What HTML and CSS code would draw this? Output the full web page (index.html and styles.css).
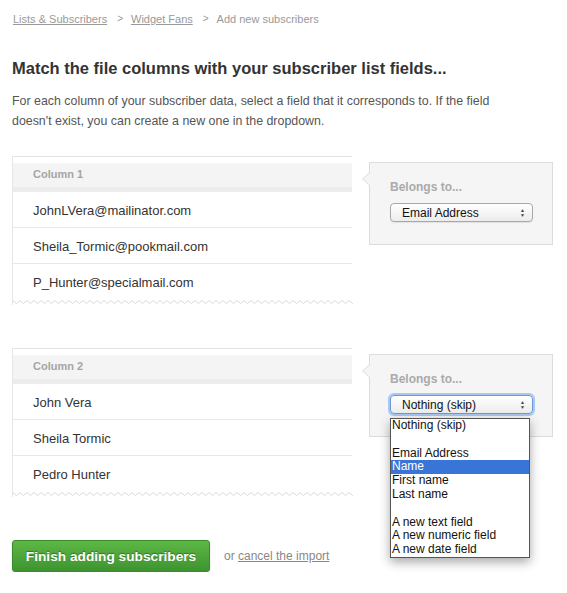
FILE: index.html
```html
<!DOCTYPE html>
<html>
<head>
<meta charset="utf-8">
<link rel="stylesheet" href="styles.css">
</head>
<body>
<div class="page">
  <nav class="crumbs">
    <a href="#">Lists &amp; Subscribers</a>
    <span class="sep">&gt;</span>
    <a href="#">Widget Fans</a>
    <span class="sep">&gt;</span>
    <span class="current">Add new subscribers</span>
  </nav>

  <h1 class="title">Match the file columns with your subscriber list fields...</h1>
  <p class="intro">For each column of your subscriber data, select a field that it corresponds to. If the field doesn't exist, you can create a new one in the dropdown.</p>

  <section class="mapping">
    <div class="column-table">
      <div class="col-head">Column 1</div>
      <div class="col-row">JohnLVera@mailinator.com</div>
      <div class="col-row">Sheila_Tormic@pookmail.com</div>
      <div class="col-row last">P_Hunter@specialmail.com</div>
      <svg class="zigzag" width="340" height="6" viewBox="0 0 340 6" preserveAspectRatio="none">
        <defs>
          <pattern id="zz1" width="7" height="6" patternUnits="userSpaceOnUse">
            <path d="M0 1.5 L3.5 4.5 L7 1.5" fill="none" stroke="#d8d8d8" stroke-width="1"/>
          </pattern>
        </defs>
        <rect width="340" height="6" fill="url(#zz1)"/>
      </svg>
    </div>
    <div class="belongs">
      <div class="belongs-label">Belongs to...</div>
      <div class="select">
        <span>Email Address</span>
        <span class="arrows">&#9650;<br>&#9660;</span>
      </div>
    </div>
  </section>

  <section class="mapping">
    <div class="column-table">
      <div class="col-head">Column 2</div>
      <div class="col-row">John Vera</div>
      <div class="col-row">Sheila Tormic</div>
      <div class="col-row last">Pedro Hunter</div>
      <svg class="zigzag" width="340" height="6" viewBox="0 0 340 6" preserveAspectRatio="none">
        <defs>
          <pattern id="zz2" width="7" height="6" patternUnits="userSpaceOnUse">
            <path d="M0 1.5 L3.5 4.5 L7 1.5" fill="none" stroke="#d8d8d8" stroke-width="1"/>
          </pattern>
        </defs>
        <rect width="340" height="6" fill="url(#zz2)"/>
      </svg>
    </div>
    <div class="belongs">
      <div class="belongs-label">Belongs to...</div>
      <div class="select focused">
        <span>Nothing (skip)</span>
        <span class="arrows">&#9650;<br>&#9660;</span>
      </div>
      <ul class="dropdown">
        <li>Nothing (skip)</li>
        <li class="blank"></li>
        <li>Email Address</li>
        <li class="selected">Name</li>
        <li>First name</li>
        <li>Last name</li>
        <li class="blank"></li>
        <li>A new text field</li>
        <li>A new numeric field</li>
        <li>A new date field</li>
      </ul>
    </div>
  </section>

  <div class="actions">
    <button class="finish">Finish adding subscribers</button>
    <span class="or">or <a href="#">cancel the import</a></span>
  </div>
</div>
</body>
</html>
```

FILE: styles.css
```css
* { box-sizing: border-box; }
html, body { margin: 0; padding: 0; background: #fff; }
body {
  font-family: "Liberation Sans", Arial, Helvetica, sans-serif;
  color: #333;
}
.page { padding: 12px 12px 0 12px; }

.crumbs {
  font-size: 11px;
  line-height: 14px;
  height: 14px;
  color: #999;
  padding-left: 1px;
  display: flex;
  align-items: center;
}
.crumbs a { color: #999; text-decoration: underline; }
.crumbs .sep { margin: 0 8px 0 10px; font-size: 10px; }
.crumbs .current { color: #999; }

.title {
  margin: 31px 0 0 0;
  font-size: 16.5px;
  line-height: 22px;
  font-weight: bold;
  color: #333;
}
.intro {
  margin: 12px 0 0 0;
  font-size: 12.4px;
  line-height: 20px;
  color: #555;
  width: 500px;
}

.mapping {
  display: flex;
  align-items: flex-start;
  gap: 17px;
  margin-top: 25px;
}
.mapping + .mapping { margin-top: 43px; }

.column-table {
  width: 340px;
  border-top: 1px solid #e3e3e3;
  border-left: 1px solid #e6e6e6;
  padding-top: 6px;
}
.col-head {
  height: 29px;
  padding: 3px 0 0 20px;
  font-size: 11px;
  line-height: 14px;
  font-weight: bold;
  color: #a5a5a5;
  background: #f4f4f4;
  border-top: 1px dotted #fafafa;
  border-bottom: 5px solid #ececec;
}
.col-row {
  height: 36px;
  padding: 11px 0 0 20px;
  font-size: 13px;
  line-height: 16px;
  color: #333;
  border-bottom: 1px solid #e8e8e8;
}
.col-row.last { border-bottom: none; height: 35px; }
.zigzag { display: block; width: 340px; height: 6px; }

.belongs {
  position: relative;
  width: 184px;
  height: 83px;
  margin-top: 6px;
  background: #f5f5f5;
  border: 1px solid #dcdcdc;
  padding: 17px 0 0 20px;
}
.belongs::before,
.belongs::after {
  content: "";
  position: absolute;
  top: 9px;
  width: 0;
  height: 0;
  border-style: solid;
}
.belongs::before {
  left: -8px;
  border-width: 7px 8px 7px 0;
  border-color: transparent #dcdcdc transparent transparent;
}
.belongs::after {
  left: -7px;
  top: 10px;
  border-width: 6px 7px 6px 0;
  border-color: transparent #f5f5f5 transparent transparent;
}
.belongs-label {
  font-size: 12px;
  line-height: 14px;
  font-weight: bold;
  color: #aaa;
}
.select {
  margin-top: 9px;
  width: 143px;
  height: 19px;
  border: 1px solid #a8a8a8;
  border-radius: 4px;
  background: linear-gradient(#ffffff, #ececec);
  box-shadow: 0 1px 1px rgba(0,0,0,0.08);
  display: flex;
  align-items: center;
  justify-content: space-between;
  padding: 0 7px 0 11px;
  font-size: 12px;
  color: #111;
}
.select.focused {
  border-color: #6a9ad8;
  box-shadow: 0 0 0 2px #a8c8f0;
}
.arrows {
  font-size: 5px;
  line-height: 5px;
  color: #444;
  text-align: center;
}

.dropdown {
  position: absolute;
  left: 20px;
  top: 63px;
  width: 140px;
  margin: 0;
  padding: 0;
  list-style: none;
  background: #fff;
  border: 1px solid #555;
  box-shadow: 0 4px 10px rgba(0,0,0,0.35);
  font-size: 12px;
  color: #111;
  z-index: 5;
}
.dropdown li {
  height: 13.8px;
  line-height: 13.8px;
  padding-left: 1px;
  white-space: nowrap;
}
.dropdown li.selected { background: #3875d7; color: #fff; }

.actions {
  margin-top: 43px;
  display: flex;
  align-items: center;
}
.finish {
  width: 198px;
  height: 32px;
  border: 1px solid #3b8b2b;
  border-radius: 3px;
  background: linear-gradient(#5db845, #3e9330);
  box-shadow: 0 1px 2px rgba(0,0,0,0.2);
  color: #fff;
  font-family: "Liberation Sans", Arial, sans-serif;
  font-size: 13.7px;
  font-weight: bold;
  text-shadow: 0 -1px 1px rgba(0,0,0,0.35);
  padding: 0;
}
.or {
  margin-left: 14px;
  font-size: 12px;
  color: #888;
}
.or a { color: #888; text-decoration: underline; }
```
